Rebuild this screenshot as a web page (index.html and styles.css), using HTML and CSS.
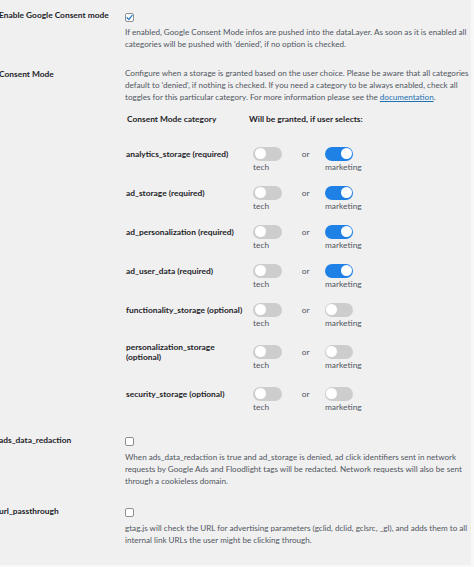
FILE: index.html
```html
<!DOCTYPE html>
<html lang="en">
<head>
<meta charset="utf-8">
<title>Consent Mode settings</title>
<link rel="stylesheet" href="styles.css">
</head>
<body>
<div class="page">
  <div class="setting first">
    <div class="setting-label">Enable Google Consent mode</div>
    <div class="setting-field">
      <span class="checkbox checked"><svg viewBox="0 0 10 10" width="9" height="9"><path d="M2.2 5.2 L4.2 7.2 L7.9 2.6" fill="none" stroke="#3582c4" stroke-width="1.5" stroke-linecap="round" stroke-linejoin="round"/></svg></span>
      <p class="desc">If enabled, Google Consent Mode infos are pushed into the dataLayer. As soon as it is enabled all categories will be pushed with 'denied', if no option is checked.</p>
    </div>
  </div>

  <div class="setting">
    <div class="setting-label">Consent Mode</div>
    <div class="setting-field">
      <p class="desc">Configure when a storage is granted based on the user choice. Please be aware that all categories default to 'denied', if nothing is checked. If you need a category to be always enabled, check all toggles for this particular category. For more information please see the <a href="#" class="link">documentation</a>.</p>
      <div class="cm-table">
        <div class="cm-head">
          <span class="cm-head-cat">Consent Mode category</span>
          <span class="cm-head-grant">Will be granted, if user selects:</span>
        </div>

        <div class="cm-row">
          <div class="cm-label">analytics_storage (required)</div>
          <div class="cm-toggle"><span class="switch"></span><span class="caption">tech</span></div>
          <div class="cm-or">or</div>
          <div class="cm-toggle"><span class="switch on"></span><span class="caption">marketing</span></div>
        </div>
        <div class="cm-row">
          <div class="cm-label">ad_storage (required)</div>
          <div class="cm-toggle"><span class="switch"></span><span class="caption">tech</span></div>
          <div class="cm-or">or</div>
          <div class="cm-toggle"><span class="switch on"></span><span class="caption">marketing</span></div>
        </div>
        <div class="cm-row">
          <div class="cm-label">ad_personalization (required)</div>
          <div class="cm-toggle"><span class="switch"></span><span class="caption">tech</span></div>
          <div class="cm-or">or</div>
          <div class="cm-toggle"><span class="switch on"></span><span class="caption">marketing</span></div>
        </div>
        <div class="cm-row">
          <div class="cm-label">ad_user_data (required)</div>
          <div class="cm-toggle"><span class="switch"></span><span class="caption">tech</span></div>
          <div class="cm-or">or</div>
          <div class="cm-toggle"><span class="switch on"></span><span class="caption">marketing</span></div>
        </div>
        <div class="cm-row">
          <div class="cm-label">functionality_storage (optional)</div>
          <div class="cm-toggle"><span class="switch"></span><span class="caption">tech</span></div>
          <div class="cm-or">or</div>
          <div class="cm-toggle"><span class="switch"></span><span class="caption">marketing</span></div>
        </div>
        <div class="cm-row">
          <div class="cm-label">personalization_storage<br>(optional)</div>
          <div class="cm-toggle"><span class="switch"></span><span class="caption">tech</span></div>
          <div class="cm-or">or</div>
          <div class="cm-toggle"><span class="switch"></span><span class="caption">marketing</span></div>
        </div>
        <div class="cm-row">
          <div class="cm-label">security_storage (optional)</div>
          <div class="cm-toggle"><span class="switch"></span><span class="caption">tech</span></div>
          <div class="cm-or">or</div>
          <div class="cm-toggle"><span class="switch"></span><span class="caption">marketing</span></div>
        </div>
      </div>
    </div>
  </div>

  <div class="setting">
    <div class="setting-label">ads_data_redaction</div>
    <div class="setting-field">
      <span class="checkbox"></span>
      <p class="desc">When ads_data_redaction is true and ad_storage is denied, ad click identifiers sent in network requests by Google Ads and Floodlight tags will be redacted. Network requests will also be sent through a cookieless domain.</p>
    </div>
  </div>

  <div class="setting">
    <div class="setting-label">url_passthrough</div>
    <div class="setting-field">
      <span class="checkbox"></span>
      <p class="desc">gtag.js will check the URL for advertising parameters (gclid, dclid, gclsrc, _gl), and adds them to all internal link URLs the user might be clicking through.</p>
    </div>
  </div>
</div>
</body>
</html>
```

FILE: styles.css
```css
html {
  background: #f8f8f9;
}
body {
  margin: 0;
  font-family: Lato, "Open Sans", sans-serif;
  font-size: 8.4px;
  color: #1d2327;
}
.page {
  width: 471px;
  height: 565px;
  overflow: hidden;
  background: #f0f0f1;
}
.setting {
  display: grid;
  grid-template-columns: 125px 1fr;
  padding-top: 17.5px;
}
.setting.first {
  padding-top: 9px;
}
.setting-label {
  font-weight: 700;
  line-height: 12px;
  margin-left: -1px;
  white-space: nowrap;
}
.setting-field {
  width: 346px;
}
.checkbox {
  display: flex;
  align-items: center;
  justify-content: center;
  box-sizing: border-box;
  width: 9px;
  height: 9px;
  margin-top: 3.5px;
  background: #fff;
  border: 1px solid #8c8f94;
  border-radius: 2px;
}
.checkbox svg {
  display: block;
  flex: none;
}
.desc {
  margin: 5.5px 0 0;
  font-size: 8.1px;
  line-height: 11.8px;
  color: #50575e;
}
.setting-field > .desc:first-child {
  margin-top: 0;
}
.link {
  color: #2271b1;
  text-decoration: underline;
}
.cm-table {
  margin: 9.5px 0 0 1px;
}
.cm-head {
  display: grid;
  grid-template-columns: 123px auto;
  font-weight: 700;
  line-height: 12px;
  padding-bottom: 15.5px;
}
.cm-head-cat {
  padding-left: 1px;
}
.cm-row {
  display: grid;
  grid-template-columns: 127px 48.7px 23.3px auto;
  align-items: center;
  padding: 6.5px 0;
}
.cm-row:last-child {
  padding-bottom: 3.5px;
}
.cm-label {
  font-weight: 700;
  line-height: 10px;
  padding-bottom: 12px;
}
.cm-toggle {
  display: flex;
  flex-direction: column;
  align-items: flex-start;
}
.switch {
  position: relative;
  display: block;
  width: 28.5px;
  height: 14px;
  border-radius: 7px;
  background: #cdcdcd;
}
.switch::after {
  content: "";
  position: absolute;
  top: 1.5px;
  left: 1.5px;
  width: 11px;
  height: 11px;
  border-radius: 50%;
  background: #fff;
}
.switch.on {
  background: #1f80e6;
}
.switch.on::after {
  left: auto;
  right: 1.5px;
}
.caption {
  display: block;
  line-height: 12px;
  color: #50575e;
}
.cm-or {
  color: #50575e;
  line-height: 12px;
  padding-bottom: 12px;
}
```
